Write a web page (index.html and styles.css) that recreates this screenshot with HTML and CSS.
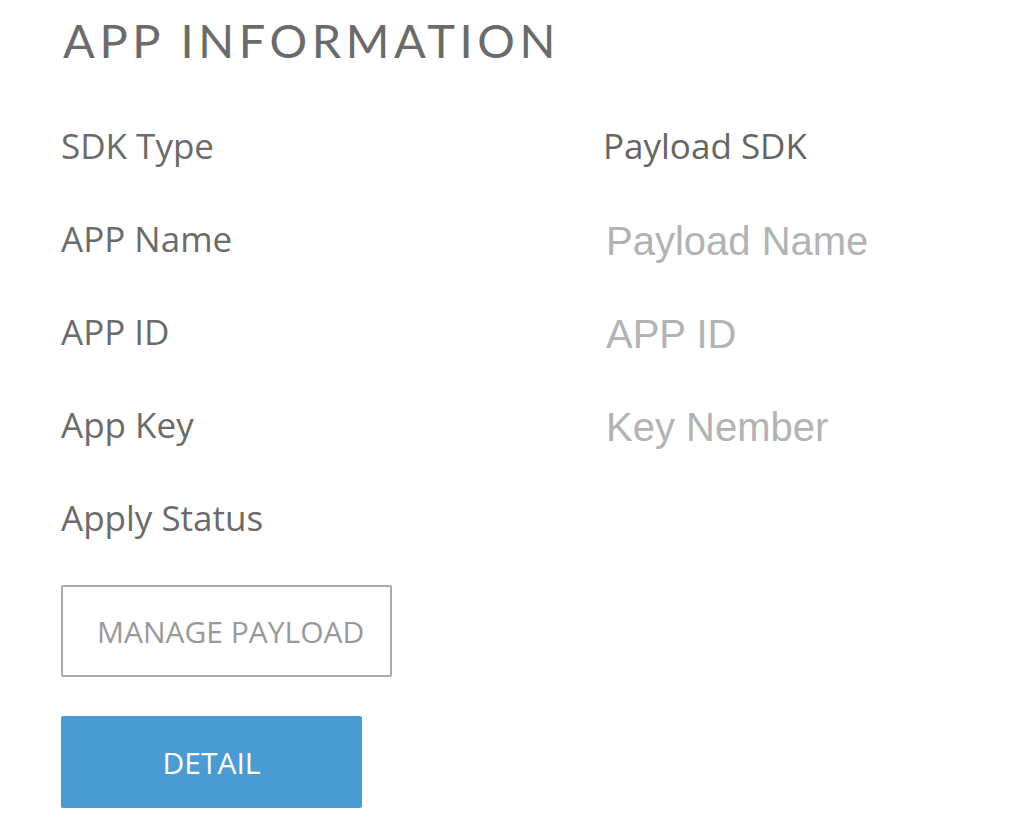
FILE: index.html
```html
<!DOCTYPE html>
<html lang="en">
<head>
  <meta charset="UTF-8">
  <title>App Information</title>
  <link rel="stylesheet" href="styles.css">
</head>
<body>

  <div class="panel">
    <h2>APP INFORMATION</h2>

    <div class="info-grid">
      <div class="label">SDK Type</div>
      <div class="value">Payload SDK</div>

      <div class="label">APP Name</div>
      <div class="value empty">Payload Name</div>

      <div class="label">APP ID</div>
      <div class="value empty">APP ID</div>

      <div class="label">App Key</div>
      <div class="value empty">Key Nember</div>

      <div class="label">Apply Status</div>
      <div class="value"></div>
    </div>

    <div class="actions">
      <button class="btn-outline">MANAGE PAYLOAD</button>
      <button class="btn-primary">DETAIL</button>
    </div>
  </div>

</body>
</html>
```

FILE: styles.css
```css
body {
  margin: 0;
  background-color: #fff;
  font-family: "Open Sans", Arial, sans-serif;
  color: #666;
}

.panel {
  padding: 12px 0 0 61px;
}

h2 {
  margin: 0 0 0 2px;
  font-family: Lato, "Open Sans", sans-serif;
  font-weight: 400;
  font-size: 47px;
  line-height: 56px;
  letter-spacing: 4.6px;
  color: #6b6b6b;
}

.info-grid {
  display: grid;
  grid-template-columns: 542px 1fr;
  grid-auto-rows: 93px;
  align-items: center;
  margin-top: 31px;
}

.label {
  font-size: 35px;
  color: #6b6b6b;
}

.value {
  font-size: 35px;
  color: #656565;
}

.value.empty {
  font-family: "Liberation Sans", Arial, sans-serif;
  font-size: 40px;
  color: #b3b3b3;
  padding: 6px 0 0 3px;
}

.actions {
  display: flex;
  flex-direction: column;
  align-items: flex-start;
  gap: 39px;
  margin-top: 21px;
}

.actions button {
  font-family: "Open Sans", Arial, sans-serif;
  font-size: 30px;
  height: 92px;
  border-radius: 2px;
  cursor: pointer;
}

.btn-outline {
  width: 331px;
  height: 91px;
  padding: 0 0 0 34px;
  text-align: left;
  background-color: #fff;
  border: 2px solid #aaa;
  color: #999;
  font-size: 31px;
  white-space: nowrap;
}

.btn-primary {
  width: 301px;
  padding: 0;
  border: none;
  background-color: #4a9bd3;
  color: #fff;
}
```
